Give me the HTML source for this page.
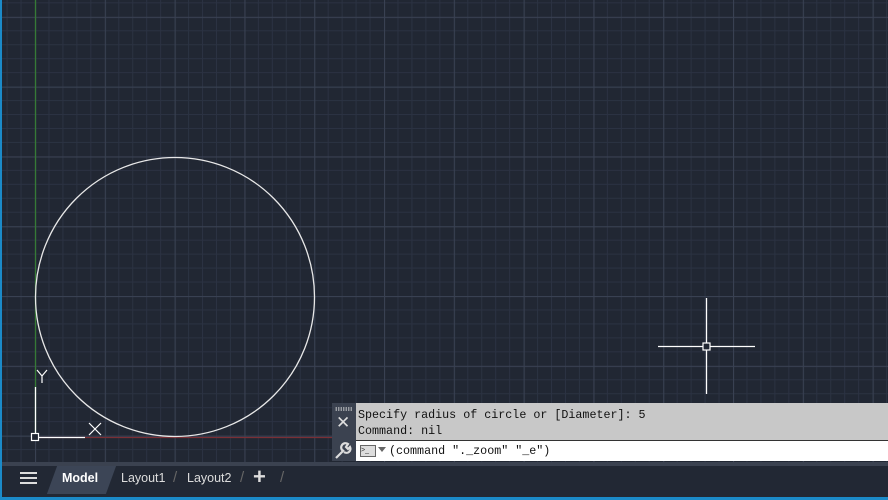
<!DOCTYPE html>
<html><head><meta charset="utf-8"><style>
html,body{margin:0;padding:0;width:888px;height:500px;overflow:hidden;background:#212733;font-family:"Liberation Sans",sans-serif}
.abs{position:absolute}
.mono{font-family:"Liberation Mono",monospace;font-size:11.7px;color:#111}
</style></head><body>
<svg class="abs" style="left:0;top:0" width="888" height="500">
<defs>
<pattern id="g" x="35" y="-53" width="69.8" height="69.8" patternUnits="userSpaceOnUse">
<g stroke="#2b3242" stroke-width="1">
<line x1="13.96" y1="0" x2="13.96" y2="69.8"/><line x1="27.92" y1="0" x2="27.92" y2="69.8"/><line x1="41.88" y1="0" x2="41.88" y2="69.8"/><line x1="55.84" y1="0" x2="55.84" y2="69.8"/>
<line y1="13.96" x1="0" y2="13.96" x2="69.8"/><line y1="27.92" x1="0" y2="27.92" x2="69.8"/><line y1="41.88" x1="0" y2="41.88" x2="69.8"/><line y1="55.84" x1="0" y2="55.84" x2="69.8"/>
</g>
<g stroke="#394152" stroke-width="1.2"><line x1="0.5" y1="0" x2="0.5" y2="69.8"/><line x1="0" y1="0.5" x2="69.8" y2="0.5"/></g>
</pattern>
</defs>
<rect width="888" height="462" fill="#212733"/>
<rect width="888" height="462" fill="url(#g)"/>
<line x1="35.5" y1="0" x2="35.5" y2="437" stroke="#367a36" stroke-width="1.3"/>
<line x1="35" y1="437.5" x2="888" y2="437.5" stroke="#7a2f35" stroke-width="1.2"/>
<circle cx="175" cy="297" r="139.5" fill="none" stroke="#e8e8e8" stroke-width="1.3"/>
<line x1="35.5" y1="387" x2="35.5" y2="437" stroke="#fff" stroke-width="1.3"/>
<line x1="35" y1="437.5" x2="85" y2="437.5" stroke="#fff" stroke-width="1.3"/>
<rect x="31.5" y="433.5" width="7" height="7" fill="#212733" stroke="#fff" stroke-width="1.2"/>
<path d="M89 423 L101 435 M101 423 L89 435" stroke="#fff" stroke-width="1.2"/>
<path d="M37 370 L42 376 L47 370 M42 376 L42 383" stroke="#fff" stroke-width="1.2" fill="none"/>
<g stroke="#fff" stroke-width="1.3"><line x1="658" y1="346.5" x2="755" y2="346.5"/><line x1="706.5" y1="298" x2="706.5" y2="394"/></g>
<rect x="703" y="343" width="7" height="7" fill="#212733" stroke="#fff" stroke-width="1.2"/>
<rect x="0" y="0" width="2" height="500" fill="#1b8ac8"/>
</svg>
<div class="abs" style="left:332px;top:403px;width:24px;height:58px;background:#3b4250"></div>
<div class="abs" style="left:335px;top:407px;width:17px;height:4px;background-image:radial-gradient(#ddd 0.8px,transparent 1px);background-size:2.5px 2px"></div>
<div class="abs" style="left:336px;top:413px;color:#ddd;font-size:17px">✕</div>
<svg class="abs" style="left:334px;top:442px" width="18" height="18"><path d="M2 16 L10 8 M9 9 A4 4 0 0 1 14 2 L12 5 L14 7 L16 5 A4 4 0 0 1 10 10" stroke="#ddd" stroke-width="2.2" fill="none"/></svg>
<div class="abs" style="left:356px;top:403px;width:532px;height:37px;background:#c8c8c8"></div>
<div class="abs mono" style="left:358px;top:408px;line-height:15.5px">Specify radius of circle or [Diameter]: 5<br>Command: nil</div>
<div class="abs" style="left:356px;top:440px;width:532px;height:1px;background:#333"></div>
<div class="abs" style="left:356px;top:441px;width:532px;height:20px;background:#fff"></div>
<div class="abs" style="left:360px;top:445px;width:14px;height:10px;border:1px solid #666;background:#ddd;font-size:7px;line-height:9px;color:#333">&gt;_</div>
<div class="abs" style="left:378px;top:447px;width:0;height:0;border-left:4px solid transparent;border-right:4px solid transparent;border-top:5px solid #666"></div>
<div class="abs mono" style="left:389px;top:444px">(command "._zoom" "_e")</div>
<div class="abs" style="left:2px;top:462px;width:886px;height:4px;background:#3b4250"></div>
<div class="abs" style="left:2px;top:466px;width:886px;height:31px;background:#222834"></div>
<div class="abs" style="left:0;top:497px;width:888px;height:3px;background:#1b8ac8"></div>
<div class="abs" style="left:20px;top:472px;width:17px;height:2px;background:#ddd;box-shadow:0 5px 0 #ddd,0 10px 0 #ddd"></div>
<div class="abs" style="left:52px;top:466px;width:59px;height:28px;background:#3c4556;transform:skewX(-20deg)"></div>
<div class="abs" style="left:62px;top:471px;color:#fff;font-size:12.5px;font-weight:bold">Model</div>
<div class="abs" style="left:121px;top:471px;color:#ddd;font-size:12.5px">Layout1</div>
<div class="abs" style="left:173px;top:469px;color:#666;font-size:15px">/</div>
<div class="abs" style="left:187px;top:471px;color:#ddd;font-size:12.5px">Layout2</div>
<div class="abs" style="left:240px;top:469px;color:#666;font-size:15px">/</div>
<div class="abs" style="left:253px;top:464px;color:#ddd;font-size:22px;font-weight:bold">+</div>
<div class="abs" style="left:280px;top:469px;color:#666;font-size:15px">/</div>
</body></html>
